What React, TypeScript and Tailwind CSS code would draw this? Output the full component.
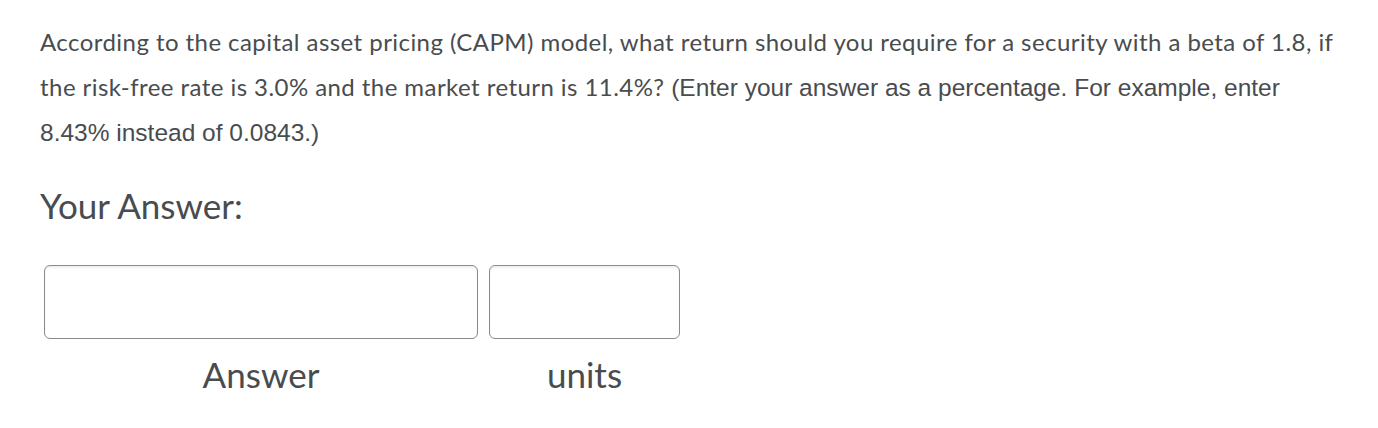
export default function App() {
  return (
    <div className="min-h-screen bg-white text-[#494c4e] pl-10 pt-5" style={{ fontFamily: 'Lato, "Liberation Sans", sans-serif' }}>
      <p className="w-[1305px] text-[24px] leading-[44.5px] tracking-[0.44px]">
        According to the capital asset pricing (CAPM) model, what return should you require for a security with a beta of 1.8, if
        the risk-free rate is 3.0% and the market return is 11.4%?{' '}
        <span className="font-['Liberation_Sans',Arial,sans-serif] text-[24.5px] tracking-normal">
          (Enter your answer as a percentage. For example, enter 8.43% instead of 0.0843.)
        </span>
      </p>

      <h2 className="mt-[29px] text-[35px] leading-[40px]">Your Answer:</h2>

      <div className="mt-[40px] flex gap-[11px] pl-1">
        <div className="flex flex-col items-center">
          <input
            type="text"
            className="w-[434px] h-[74px] rounded-md border border-[#8a8a8a] bg-white shadow-[inset_0_2px_2px_rgba(0,0,0,0.06)] outline-none"
          />
          <span className="mt-[15px] text-[35px] leading-[40px]">Answer</span>
        </div>
        <div className="flex flex-col items-center">
          <input
            type="text"
            className="w-[191px] h-[74px] rounded-md border border-[#8a8a8a] bg-white shadow-[inset_0_2px_2px_rgba(0,0,0,0.06)] outline-none"
          />
          <span className="mt-[15px] text-[35px] leading-[40px]">units</span>
        </div>
      </div>
    </div>
  );
}
